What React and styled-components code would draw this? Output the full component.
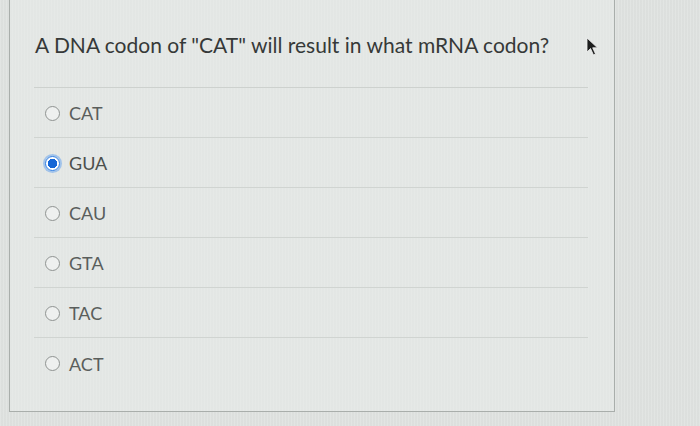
import React, { useState } from "react";
import styled, { createGlobalStyle } from "styled-components";

const GlobalStyle = createGlobalStyle`
   html, body {
      margin: 0;
      padding: 0;
   }

   body {
      width: 700px;
      height: 426px;
      overflow: hidden;
      background-color: #dfe2e0;
      background-image: repeating-linear-gradient(
         90deg,
         rgba(255, 255, 255, 0.1) 0px,
         rgba(255, 255, 255, 0.1) 1px,
         rgba(0, 0, 0, 0.012) 1px,
         rgba(0, 0, 0, 0.012) 3px
      );
      font-family: Lato, "Open Sans", "Liberation Sans", sans-serif;
   }
`;

const Page = styled.div`
   position: relative;
   width: 700px;
   height: 426px;
   padding-left: 9px;
   box-sizing: border-box;
`;

const Card = styled.div`
   width: 606px;
   height: 412px;
   box-sizing: border-box;
   border: 1px solid #a9aeab;
   border-top: none;
   background-color: rgba(234, 237, 235, 0.5);
   padding: 0 26px 0 24px;
   display: flex;
   flex-direction: column;
`;

const Question = styled.p`
   margin: 0;
   height: 88px;
   box-sizing: border-box;
   padding: 31px 0 0 1px;
   font-size: 21px;
   line-height: 28px;
   color: #363938;
   border-bottom: 1px solid #cdd1ce;
`;

const Options = styled.div`
   display: flex;
   flex-direction: column;
`;

const Option = styled.label`
   display: flex;
   align-items: center;
   gap: 9px;
   height: 50px;
   padding: 1px 0 0 11px;
   box-sizing: border-box;
   border-bottom: ${({ $last }) => ($last ? "none" : "1px solid #d0d4d1")};
   font-size: 18px;
   color: ${({ $checked }) => ($checked ? "#4b4f4d" : "#5a5e5c")};
   cursor: pointer;
`;

const Radio = styled.span`
   width: 15px;
   height: 15px;
   border-radius: 50%;
   box-sizing: border-box;
   flex-shrink: 0;
   background: ${({ $checked }) =>
      $checked
         ? "radial-gradient(circle, #1466d6 0 4.5px, #ffffff 5px)"
         : "#eef0ef"};
   border: 1px solid ${({ $checked }) => ($checked ? "#2f7fe6" : "#8f9391")};
   box-shadow: ${({ $checked }) =>
      $checked ? "0 0 0 2px rgba(80, 150, 240, 0.45)" : "none"};
`;

const Cursor = styled.svg`
   position: absolute;
   left: 586px;
   top: 37px;
   width: 13px;
   height: 20px;
`;

const choices = ["CAT", "GUA", "CAU", "GTA", "TAC", "ACT"];

const App = () => {
   const [selected, setSelected] = useState("GUA");

   return (
      <>
         <GlobalStyle />
         <Page>
            <Card>
               <Question>
                  A DNA codon of "CAT" will result in what mRNA codon?
               </Question>

               <Options>
                  {choices.map((choice, i) => (
                     <Option
                        key={choice}
                        $checked={selected === choice}
                        $last={i === choices.length - 1}
                        onClick={() => setSelected(choice)}
                     >
                        <Radio $checked={selected === choice} />
                        {choice}
                     </Option>
                  ))}
               </Options>
            </Card>

            <Cursor viewBox="0 0 13 20">
               <path
                  d="M1 1 L1 15 L4.5 11.5 L7.5 18 L9.5 17 L6.7 10.8 L11.5 10.8 Z"
                  fill="#1c1e1d"
                  stroke="#f2f2f2"
                  strokeWidth="0.8"
               />
            </Cursor>
         </Page>
      </>
   );
};

export default App;
